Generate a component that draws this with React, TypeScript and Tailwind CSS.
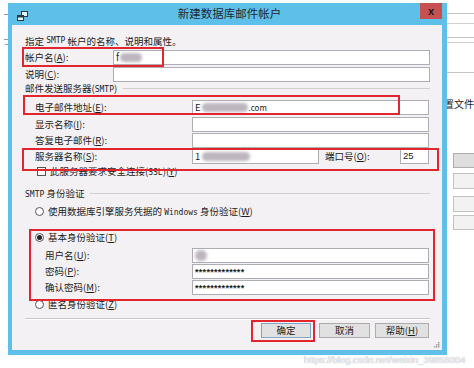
import React from 'react';

const Box: React.FC<{ className?: string; children?: React.ReactNode }> = ({ className = '', children }) => (
  <div className={`h-[15px] bg-white border border-[#adadb3] flex items-center px-[2px] overflow-hidden ${className}`}>
    {children}
  </div>
);

const Blob: React.FC<{ className?: string }> = ({ className = '' }) => (
  <span className={`inline-block h-[9px] rounded-full bg-[#bdb6be] blur-[1.5px] ${className}`} />
);

const Radio: React.FC<{ checked?: boolean }> = ({ checked }) => (
  <span className="w-[9px] h-[9px] rounded-full border border-[#555] bg-white flex items-center justify-center shrink-0">
    {checked && <span className="w-[5px] h-[5px] rounded-full bg-[#222]" />}
  </span>
);

const RedBox: React.FC<{ className: string }> = ({ className }) => (
  <div className={`absolute border-2 border-[#e3262e] z-20 ${className}`} />
);

const Latin: React.FC<{ children: React.ReactNode }> = ({ children }) => (
  <span className="font-['DejaVu_Sans_Mono',monospace] text-[8px]">{children}</span>
);

const Stars = () => (
  <span className="font-['Liberation_Sans',sans-serif] text-[9px] font-bold tracking-[0.3px] leading-none pt-[2px]">*************</span>
);

const App: React.FC = () => {
  return (
    <div className="relative w-[474px] h-[368px] bg-white overflow-hidden pt-[3px] pl-[8px] font-['Noto_Sans_CJK_SC',sans-serif] text-[9.5px] text-[#1c1c1c]">
      {/* window behind the dialog */}
      <div className="absolute left-[447px] top-[13px] w-[27px] h-px bg-[#c4c4c4]" />
      <div className="absolute left-[447px] top-[23px] w-[27px] h-px bg-[#d0d0d0]" />
      <div className="absolute left-[447px] top-[37px] w-[27px] h-px bg-[#c4c4c4]" />
      <div className="absolute left-[447px] top-[42px] w-[27px] h-px bg-[#d0d0d0]" />
      <div className="absolute left-[447px] top-[72px] w-[27px] h-px bg-[#c4c4c4]" />
      <div className="absolute left-[444px] top-[96px] text-[10px] whitespace-nowrap">置文件夹</div>
      <div className="absolute left-[453px] top-[153px] w-[30px] h-[15px] bg-[#dedede] border border-[#adadad]" />
      <div className="absolute left-[453px] top-[173px] w-[30px] h-[16px] bg-[#f2f2f2] border border-[#c3c3c3]" />
      <div className="absolute left-[453px] top-[196px] w-[30px] h-[16px] bg-[#f2f2f2] border border-[#c3c3c3]" />
      <div className="absolute left-[453px] top-[215px] w-[30px] h-[15px] bg-[#f2f2f2] border border-[#c3c3c3]" />
      <div className="absolute left-[4px] top-[14px] w-[4px] h-px bg-[#9a9a9a]" />
      <div className="absolute left-[4px] top-[39px] w-[4px] h-px bg-[#9a9a9a]" />
      <div className="absolute left-[5px] top-[44px] w-[3px] h-px bg-[#9a9a9a]" />

      {/* dialog */}
      <div className="relative z-10 w-[439px] h-[352px] bg-[#5ec0e9] flex flex-col">
        <div className="relative h-[22px] shrink-0 flex items-center justify-center">
          <svg className="absolute left-[9px] top-[8px]" width="11" height="10" viewBox="0 0 11 10">
            <rect x="4.5" y="0.5" width="6" height="5" fill="#e8f4fb" stroke="#2a3a4a" />
            <rect x="0.5" y="4.5" width="6" height="5" fill="#e8f4fb" stroke="#2a3a4a" />
            <rect x="1" y="5" width="5" height="1.5" fill="#2a3a4a" />
          </svg>
          <span className="text-[11.5px] text-[#1e2a33] pl-[4px]">新建数据库邮件帐户</span>
          <div className="absolute right-[5px] top-0 w-[22px] h-[16px] bg-[#c75050] flex items-center justify-center text-[11px] font-bold leading-none text-[#1a1a1a] font-['Liberation_Sans',sans-serif]">
            x
          </div>
        </div>

        <div className="relative flex-1 ml-[4px] mr-[5px] mb-[5px] bg-[#f4f1f4] pl-[13px] flex flex-col">
          <div className="mt-[9px] h-[14px] flex items-center whitespace-pre">指定 <Latin>SMTP</Latin> 帐户的名称、说明和属性。</div>

          <div className="mt-[2px] flex items-center">
            <span className="w-[88px]">帐户名(<u>A</u>):</span>
            <Box className="w-[317px]">
              <span>f</span>
              <Blob className="w-[22px] ml-[1px]" />
            </Box>
          </div>
          <div className="mt-[2px] flex items-center">
            <span className="w-[88px]">说明(<u>C</u>):</span>
            <Box className="w-[317px]" />
          </div>

          <div className="h-[13px] flex items-center">
            <span className="whitespace-nowrap">邮件发送服务器(<Latin>SMTP</Latin>)</span>
            <span className="ml-[6px] flex-1 mr-[12px] h-px bg-[#cfcfcf]" />
          </div>

          <div className="mt-[5px] ml-[10px] flex items-center">
            <span className="w-[157px]">电子邮件地址(<u>E</u>):</span>
            <Box className="w-[237px]">
              <span>E</span>
              <Blob className="w-[46px] ml-[1px]" />
              <span className="text-[8px] ml-[1px]">.com</span>
            </Box>
          </div>
          <div className="mt-[2px] ml-[10px] flex items-center">
            <span className="w-[157px]">显示名称(<u>I</u>):</span>
            <Box className="w-[237px]" />
          </div>
          <div className="mt-[1px] ml-[10px] flex items-center">
            <span className="w-[157px]">答复电子邮件(<u>R</u>):</span>
            <Box className="w-[237px]" />
          </div>
          <div className="mt-[1px] ml-[10px] flex items-center">
            <span className="w-[157px]">服务器名称(<u>S</u>):</span>
            <Box className="w-[127px] border-[#8fb4d6]">
              <span>1</span>
              <Blob className="w-[48px] ml-[2px]" />
            </Box>
            <span className="ml-[6px] w-[75px]">端口号(<u>O</u>):</span>
            <Box className="w-[29px]">
              <span className="font-['Liberation_Sans',sans-serif] text-[9.5px]">25</span>
            </Box>
          </div>
          <div className="mt-[1px] ml-[12px] h-[12px] flex items-center">
            <span className="w-[9px] h-[9px] border border-[#555] bg-white shrink-0" />
            <span className="ml-[4px]">此服务器要求安全连接(<Latin>SSL</Latin>)(<u>Y</u>)</span>
          </div>

          <div className="mt-[9px] h-[14px] flex items-center">
            <span className="whitespace-pre"><Latin>SMTP</Latin> 身份验证</span>
            <span className="ml-[6px] flex-1 mr-[12px] h-px bg-[#cfcfcf]" />
          </div>
          <div className="mt-[4px] ml-[10px] h-[14px] flex items-center">
            <Radio />
            <span className="ml-[4px] whitespace-pre">使用数据库引擎服务凭据的 <Latin>Windows</Latin> 身份验证(<u>W</u>)</span>
          </div>
          <div className="mt-[12px] ml-[10px] h-[14px] flex items-center">
            <Radio checked />
            <span className="ml-[4px]">基本身份验证(<u>T</u>)</span>
          </div>
          <div className="mt-[4px] ml-[20px] flex items-center">
            <span className="w-[147px]">用户名(<u>U</u>):</span>
            <Box className="w-[237px]">
              <Blob className="w-[12px] h-[11px]" />
            </Box>
          </div>
          <div className="mt-[1px] ml-[20px] flex items-center">
            <span className="w-[147px]">密码(<u>P</u>):</span>
            <Box className="w-[237px]">
              <Stars />
            </Box>
          </div>
          <div className="mt-[1px] ml-[20px] flex items-center">
            <span className="w-[147px]">确认密码(<u>M</u>):</span>
            <Box className="w-[237px]">
              <Stars />
            </Box>
          </div>
          <div className="mt-[2px] ml-[10px] h-[14px] flex items-center">
            <Radio />
            <span className="ml-[4px]">匿名身份验证(<u>Z</u>)</span>
          </div>

          <div className="mt-[7px] w-[405px] h-[2px] border-t border-[#c8c8c8] border-b border-b-white" />

          <div className="mt-[3px] w-[404px] flex justify-end">
            <div className="w-[50px] h-[15px] bg-[#e1e1e1] border border-[#7ea6c8] flex items-center justify-center">确定</div>
            <div className="ml-[8px] w-[51px] h-[15px] bg-[#e1e1e1] border border-[#adadad] flex items-center justify-center">取消</div>
            <div className="ml-[5px] w-[54px] h-[15px] bg-[#e1e1e1] border border-[#adadad] flex items-center justify-center">帮助(<u>H</u>)</div>
          </div>

          <svg className="absolute right-[2px] bottom-[2px]" width="6" height="6" viewBox="0 0 6 6">
            <rect x="4" y="0" width="1.5" height="1.5" fill="#a0a0a0" />
            <rect x="2" y="2" width="1.5" height="1.5" fill="#a0a0a0" />
            <rect x="4" y="2" width="1.5" height="1.5" fill="#a0a0a0" />
            <rect x="0" y="4" width="1.5" height="1.5" fill="#a0a0a0" />
            <rect x="2" y="4" width="1.5" height="1.5" fill="#a0a0a0" />
            <rect x="4" y="4" width="1.5" height="1.5" fill="#a0a0a0" />
          </svg>
        </div>
      </div>

      {/* annotation boxes */}
      <RedBox className="left-[22px] top-[47px] w-[142px] h-[20px]" />
      <RedBox className="left-[23px] top-[95px] w-[377px] h-[20px]" />
      <RedBox className="left-[22px] top-[148px] w-[417px] h-[23px]" />
      <RedBox className="left-[29px] top-[229px] w-[406px] h-[72px]" />
      <RedBox className="left-[251px] top-[320px] w-[64px] h-[22px]" />

      <div className="absolute left-[304px] top-[353px] z-20 whitespace-nowrap font-['Liberation_Sans',sans-serif] text-[9.5px] text-[#f4f4f8] [text-shadow:0_0_1px_#8e8e9c]">
        https://blog.csdn.net/weixin_39856004
      </div>
    </div>
  );
};

export default App;
